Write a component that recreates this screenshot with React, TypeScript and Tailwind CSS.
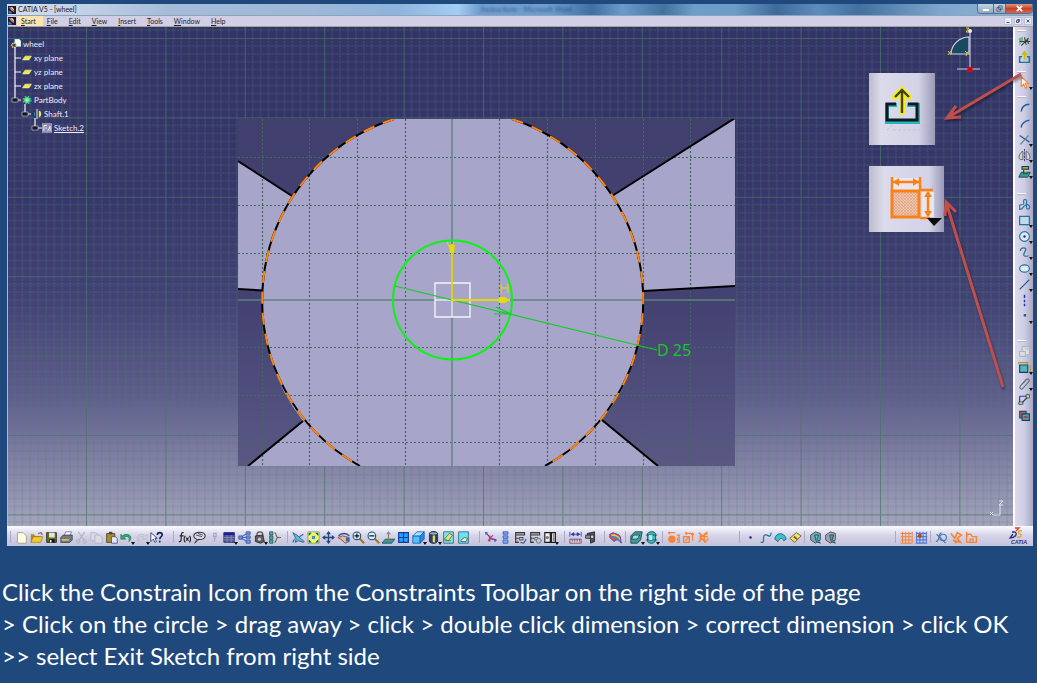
import type { ReactNode } from "react";
import clsx from "clsx";

interface ITool {
  name: string;
  art: ReactNode;
  menu?: boolean;
}

interface IToolGroup {
  size: string;
  tools: ITool[];
}

const teal = "#127a8c";
const navy = "#1b2f8f";
const orange = "#f98332";

const menus = ["Start", "File", "Edit", "View", "Insert", "Tools", "Window", "Help"];

const bottomGroups: IToolGroup[] = [
  {
    size: "w-[163px]",
    tools: [
      { name: "New", art: <path d="M3 2h7l4 4v9H3z" fill="#fffde0" stroke="#99978a" /> },
      {
        name: "Open",
        art: (
          <>
            <path d="M1 14V4h4l1 2h7v3z" fill="#b48a1e" />
            <path d="M1 14l3-7h12l-3 7z" fill="#f3c932" stroke="#8b6b16" strokeWidth=".7" />
            <path d="M10 3l4-1 1 3" fill="none" stroke="#333" />
          </>
        ),
      },
      {
        name: "Save",
        art: (
          <>
            <path d="M2 2h12v12H2z" fill="#6b6c24" stroke="#24251a" />
            <path d="M5 2h7v6H5z" fill="#e4e6da" />
            <path d="M5 10h7v4H5z" fill="#151515" />
            <path d="M6 11h2v3H6z" fill="#fff" />
          </>
        ),
      },
      {
        name: "Print",
        art: (
          <>
            <path d="M5 7l2-6h7l-2 6z" fill="#fff" stroke="#556" strokeWidth=".8" />
            <path d="M1 8l3-3h11v6l-3 3H1z" fill="#777a80" stroke="#3b3d48" />
            <path d="M2 10h9v2H2z" fill="#d7c84a" />
            <path d="M13 7l2-2v5l-2 2z" fill="#3f7abf" />
          </>
        ),
      },
      {
        name: "Cut",
        art: (
          <g fill="none" stroke="#b4b6c4" strokeWidth="1.4">
            <path d="M4 1l7 10M12 1L5 11" />
            <circle cx="4" cy="13" r="2" />
            <circle cx="12" cy="13" r="2" />
          </g>
        ),
      },
      {
        name: "Copy",
        art: (
          <g fill="#d9d9e6" stroke="#b0b2c0">
            <path d="M1 2h6l3 3v7H1z" />
            <path d="M6 5h6l3 3v7H6z" />
          </g>
        ),
      },
      {
        name: "Paste",
        art: (
          <>
            <path d="M2 3h10v11H2z" fill="#a98a31" stroke="#4b421e" />
            <path d="M5 1h4v3H5z" fill="#444" />
            <path d="M8 7h5l2 2v6H8z" fill="#e8e8f4" stroke="#4a4c8c" />
          </>
        ),
      },
      {
        name: "Undo",
        menu: true,
        art: <path d="M1 4v6h6L5 8c3-3 8-1 6 5 6-6-1-12-8-7z" fill="#2fae6e" stroke="#11614a" strokeWidth=".7" />,
      },
      {
        name: "Redo",
        menu: true,
        art: <path d="M15 4v6H9l2-2c-3-3-8-1-6 5-6-6 1-12 8-7z" fill="#d0d1dd" stroke="#b0b2bf" strokeWidth=".7" />,
      },
      {
        name: "What's this",
        art: (
          <>
            <path d="M1 2v11l3-3 2 4 2-1-2-4h3z" fill="#fff" stroke="#1c2c6b" />
            <path d="M9 5c0-4 6-4 6 0 0 2-3 2-3 5M12 12v2" fill="none" stroke="#17275c" strokeWidth="2" />
          </>
        ),
      },
    ],
  },
  {
    size: "w-[114px]",
    tools: [
      {
        name: "Formula",
        art: (
          <path
            d="M7 2C4 1 4 4 4 7s0 7-3 6M2 6h5M9 6c-2 2-2 6 0 8M14 6c2 2 2 6 0 8M10 8l3 4M13 8l-3 4"
            fill="none"
            stroke="#222"
            strokeWidth="1.4"
          />
        ),
      },
      {
        name: "Comment",
        art: (
          <>
            <ellipse cx="8" cy="6" rx="7" ry="4.5" fill="#dadbe6" stroke="#30303a" strokeWidth="1.3" />
            <path d="M5 10l-3 5 6-5M4 5l7 2M6 3l6 2" fill="none" stroke="#30303a" />
          </>
        ),
      },
      {
        name: "Check",
        art: <path d="M7 3h3v4H7zM7 9h3M8 10v3" fill="none" stroke="#a4a6b6" strokeWidth="1.4" />,
      },
      {
        name: "Design table",
        menu: true,
        art: (
          <>
            <path d="M1 2h13v12H1z" fill="#4c568f" stroke="#30345e" />
            <path d="M1 2h13v3H1z" fill="#1c1f9e" />
            <path d="M1 8h13M1 11h13M5 5v9M10 5v9" stroke="#8a90bb" />
          </>
        ),
      },
      {
        name: "Law",
        art: (
          <>
            <path d="M3 8l8-5M3 8h9M3 8l8 5" stroke="#4a6ac0" strokeWidth="1.3" />
            <path d="M1 6h4v4H1zM10 1h5v3h-5zM10 6h5v3h-5zM10 11h5v4h-5z" fill="#6f9ce0" stroke="#3552a0" />
          </>
        ),
      },
      {
        name: "Lock",
        menu: true,
        art: (
          <>
            <path d="M5 7V4c0-4 7-4 7 0v3" fill="none" stroke="#555" strokeWidth="1.6" />
            <path d="M3 6l9-1 2 8-5 2-6-2z" fill="#5c5c62" stroke="#242424" />
            <circle cx="8" cy="10" r="2" fill="#c8c8c8" />
          </>
        ),
      },
      {
        name: "Equivalent dimensions",
        art: (
          <>
            <path d="M2 1h4v4H2zM2 6h4v4H2zM2 11h4v4H2z" fill="#5aa59b" stroke="#1e5c63" />
            <path d="M8 2c3 0 1 5 4 6-3 1-1 6-4 6M12 8h4" fill="none" stroke="#6e6a4c" strokeWidth="1.4" />
          </>
        ),
      },
    ],
  },
  {
    size: "w-[192px]",
    tools: [
      {
        name: "Fly mode",
        art: (
          <>
            <path d="M1 2l5 3 9 8-1 1-6-2-4 2 1-4z" fill="#65b6d4" stroke="#245c91" />
            <path d="M9 7l5-3M3 10L1 14" stroke="#3167a3" strokeWidth="1.4" />
          </>
        ),
      },
      {
        name: "Fit all in",
        art: (
          <>
            <path d="M1 1h14v14H1z" fill="#f4f66e" stroke="#8aa36a" />
            <path d="M2 2h4L2 6zM14 2h-4l4 4zM2 14h4l-4-4zM14 14h-4l4-4z" fill="#17607a" />
            <path d="M6 6h4v4H6z" fill="#2c9cb4" />
          </>
        ),
      },
      {
        name: "Pan",
        art: (
          <>
            <path d="M8 2v12M2 8h12" stroke="#23467f" strokeWidth="1.8" />
            <path d="M8 0l3 4H5zM8 16l3-4H5zM0 8l4-3v6zM16 8l-4-3v6z" fill="#23467f" />
          </>
        ),
      },
      {
        name: "Rotate",
        art: (
          <>
            <path d="M2 6c3-4 10-4 13 0" fill="none" stroke="#274d8f" strokeWidth="1.8" />
            <path d="M1 8l6-2 8 2v5l-5 2-4-4z" fill="#eab79f" stroke="#754536" />
            <path d="M11 8h4v5h-4z" fill="#2f6cbb" />
          </>
        ),
      },
      {
        name: "Zoom in",
        art: (
          <>
            <path d="M9 9l6 6" stroke="#a47328" strokeWidth="2.4" />
            <circle cx="6" cy="6" r="4.7" fill="#d7f1fa" stroke="#234770" strokeWidth="1.3" />
            <path d="M6 3v6M3 6h6" stroke="#111" strokeWidth="1.5" />
          </>
        ),
      },
      {
        name: "Zoom out",
        art: (
          <>
            <path d="M9 9l6 6" stroke="#a47328" strokeWidth="2.4" />
            <circle cx="6" cy="6" r="4.7" fill="#d7f1fa" stroke="#234770" strokeWidth="1.3" />
            <path d="M3 6h6" stroke="#111" strokeWidth="1.5" />
          </>
        ),
      },
      {
        name: "Normal view",
        art: (
          <>
            <path d="M4 10h12l-4 5H0z" fill="#319b9e" stroke="#17525c" />
            <path d="M8 12V3" stroke="#a57638" strokeWidth="1.4" />
            <path d="M8 0l3 4H5z" fill="#6c90d4" />
          </>
        ),
      },
      {
        name: "Multi-view",
        art: (
          <>
            <path d="M2 2h12v12H2z" fill="#22a5f5" stroke="#1b34a1" strokeWidth="1.4" />
            <path d="M8 2v12M2 8h12" stroke="#1b34a1" strokeWidth="1.4" />
          </>
        ),
      },
      {
        name: "Isometric view",
        menu: true,
        art: (
          <>
            <path d="M1 6h9v9H1z" fill="#4bc4f7" stroke="#1b55b8" />
            <path d="M1 6l5-5h9l-5 5z" fill="#a0e6ff" stroke="#1b55b8" />
            <path d="M10 6l5-5v9l-5 5z" fill="#238add" stroke="#1b55b8" />
          </>
        ),
      },
      {
        name: "Shading",
        menu: true,
        art: (
          <>
            <path d="M3 3c2-3 8-3 10 0v10c-2 3-8 3-10 0z" fill="#263d79" stroke="#222338" />
            <path d="M7 4h3v10H7z" fill="#e4d84a" />
            <ellipse cx="8" cy="3" rx="5" ry="2" fill="#8eb5c8" stroke="#222338" />
          </>
        ),
      },
      {
        name: "Hide/Show",
        art: (
          <>
            <path d="M2 1h12v14H2z" fill="#7ce7e9" stroke="#375c78" />
            <path d="M3 10l6-7 4 2-5 7zM3 12h8" fill="#e8df7c" stroke="#536f47" />
          </>
        ),
      },
      {
        name: "Swap visible space",
        art: (
          <>
            <path d="M2 1h12v14H2z" fill="#69e4f3" stroke="#375c78" />
            <path d="M5 11l4-3 4 1-2 4H5z" fill="#faf7c0" stroke="#285a74" />
          </>
        ),
      },
    ],
  },
  {
    size: "w-[85px]",
    tools: [
      {
        name: "Axis system",
        art: (
          <>
            <path d="M2 2l5 5v6M7 9l8 2" fill="none" stroke="#384ac0" strokeWidth="1.6" />
            <path d="M5 12l6-7M6 6l5 5" stroke="#e3324d" strokeWidth="1.5" />
            <path d="M1 1l4 1-3 3zM12 9l4 2-3 3z" fill="#425fca" />
          </>
        ),
      },
      {
        name: "Mean dimensions",
        art: <path d="M5 1h6v3H5zM5 6h6v3H5zM5 11h6v4H5z" fill="#80a9f4" stroke="#4065c2" strokeWidth="1.2" />,
      },
      {
        name: "Create datum",
        art: (
          <>
            <path d="M2 2h11v3H2zM2 5v9h4M2 9h4" fill="#c7b874" stroke="#31384e" strokeWidth="1.3" />
            <path d="M7 8h4v3H7zM8 14l4 1 3-5" fill="none" stroke="#3c5379" strokeWidth="1.3" />
          </>
        ),
      },
      {
        name: "Keep mode",
        art: (
          <>
            <path d="M2 2h11v3H2zM2 5v9h4M2 9h4" fill="#c7b874" stroke="#31384e" strokeWidth="1.3" />
            <path d="M7 8h4v3H7z" fill="none" stroke="#3c5379" />
            <circle cx="12" cy="12" r="3" fill="#c3c5cf" stroke="#676b71" />
          </>
        ),
      },
      {
        name: "Only current body",
        menu: true,
        art: (
          <>
            <path d="M1 2h13v12H1z" fill="#f4f4f4" stroke="#1b1b1b" strokeWidth="1.4" />
            <path d="M7 2h3v12H7z" fill="#222" />
            <circle cx="4" cy="8" r="2" fill="#777" />
            <path d="M11 3h2v5h-2z" fill="#cf7644" />
            <path d="M11 8h2v4h-2z" fill="#409a5a" />
          </>
        ),
      },
    ],
  },
  {
    size: "w-[40px]",
    tools: [
      {
        name: "Measure between",
        art: (
          <>
            <path d="M2 4h12M1 1v6M15 1v6M3 4l3-2v4zM13 4l-3-2v4z" fill="#2a3bb1" stroke="#2a3bb1" />
            <path d="M1 10h14v5H1z" fill="#e8c7c4" stroke="#634b76" />
            <path d="M4 10v3M7 10v3M10 10v3M13 10v3" stroke="#634b76" />
          </>
        ),
      },
      {
        name: "Measure item",
        art: (
          <>
            <path d="M4 3l9-2v12l-5 2V9L4 8z" fill="#4c4d55" stroke="#25252b" />
            <path d="M2 5h6v4H2z" fill="#87919a" stroke="#26303d" />
            <circle cx="10" cy="7" r="1.5" fill="#d8dae0" />
          </>
        ),
      },
    ],
  },
  {
    size: "w-[21px]",
    tools: [
      {
        name: "Apply material",
        art: (
          <>
            <path d="M1 4l4-2c3 2 7 1 9 5l1 8c-2-5-6-5-9-2L1 8z" fill="#df4f47" stroke="#4a3f83" />
            <path d="M3 5c4 0 9 1 10 6" fill="none" stroke="#f0c84d" strokeWidth="2" />
            <path d="M3 8c4-1 8 0 10 5" fill="none" stroke="#2c93dd" strokeWidth="2" />
          </>
        ),
      },
    ],
  },
  {
    size: "w-[37px]",
    tools: [
      {
        name: "Cut part",
        menu: true,
        art: (
          <>
            <path d="M1 6l5-5h9l-2 10-4 4H1z" fill="#3c9e9c" stroke="#173b47" />
            <path d="M4 5h8l-3 5H2z" fill="#9de3dd" stroke="#173b47" />
          </>
        ),
      },
      {
        name: "Usable edges",
        menu: true,
        art: (
          <>
            <path d="M3 3c3-3 8-3 10 0v9c-2 4-7 4-10 1z" fill="#42b5b9" stroke="#184d57" />
            <path d="M1 5h14M1 11h14" stroke="#184d57" />
            <path d="M5 5h4v6H5z" fill="#aef0ee" />
          </>
        ),
      },
    ],
  },
  {
    size: "w-[77px]",
    tools: [
      {
        name: "Diagnosis",
        art: (
          <>
            <circle cx="6" cy="10" r="4.5" fill={orange} />
            <path d="M1 2h9M12 5h3v9h-3M13 8v4M3 1v3" fill="none" stroke={orange} strokeWidth="1.6" />
          </>
        ),
      },
      {
        name: "Geometrical constraints",
        art: <path d="M2 7h7v7H2zM4 3h9v9M5 5V1M15 4h-4M4 12l4-4" fill="none" stroke={orange} strokeWidth="1.6" />,
      },
      {
        name: "Dimensional constraints",
        art: (
          <path
            d="M2 2l5 4 5-4M3 7h10M2 14l4-5 4 5 4-5M12 1v4M4 5v8M9 3v10"
            fill="none"
            stroke={orange}
            strokeWidth="1.6"
          />
        ),
      },
    ],
  },
  {
    size: "w-[65px]",
    tools: [
      { name: "Point", art: <circle cx="8" cy="8" r="1.6" fill={navy} /> },
      {
        name: "Curve",
        art: <path d="M2 14c7 1 1-7 5-9s7 6 8-3" fill="none" stroke="#2676a1" strokeWidth="1.5" />,
      },
      {
        name: "Surface",
        art: <path d="M1 10C2 1 13 1 15 10l-3 2c-2-5-5-3-7 1z" fill="#3ac1cf" stroke="#185b77" />,
      },
      {
        name: "Volume",
        art: (
          <>
            <path d="M1 9l8-7 6 4-8 8z" fill="#f2df64" stroke="#575037" />
            <path d="M6 7l4 3" stroke="#575037" strokeWidth="2" />
          </>
        ),
      },
    ],
  },
  {
    size: "w-[91px]",
    tools: [
      {
        name: "Select feature",
        art: (
          <>
            <path d="M2 5l6-4 6 2v8l-6 4-6-4z" fill="#7ba7b0" stroke="#384451" />
            <path d="M7 5h5l-2 5 4 5-5-2z" fill="#36d0d7" stroke="#263d4e" />
          </>
        ),
      },
      {
        name: "Select geometry",
        art: (
          <>
            <path d="M2 5l6-4 6 2v8l-6 4-6-4z" fill="#9aa4ac" stroke="#593c48" />
            <path d="M7 5h5l-2 5 4 5-5-2z" fill="#42a9c1" stroke="#263d4e" />
          </>
        ),
      },
    ],
  },
  {
    size: "w-[35px]",
    tools: [
      {
        name: "Grid",
        art: <path d="M3 1v14M7 1v14M11 1v14M15 1v14M1 3h14M1 7h14M1 11h14M1 15h14" stroke={orange} strokeWidth="1.3" />,
      },
      {
        name: "Snap to point",
        art: (
          <>
            <path d="M2 1v14M6 1v14M10 1v14M14 1v14M1 3h14M1 7h14M1 11h14M1 15h14" stroke="#557ad4" strokeWidth="1.4" />
            <circle cx="6" cy="6" r="2.5" fill="#a84c28" />
          </>
        ),
      },
    ],
  },
  {
    size: "w-[49px]",
    tools: [
      {
        name: "Construction element",
        art: (
          <g fill="none" stroke="#3f7ea8" strokeWidth="1.4">
            <path d="M1 13c6-1 2-9 7-11M2 4l11 11" />
            <circle cx="10" cy="8" r="4" />
          </g>
        ),
      },
      {
        name: "Constraints in sketch",
        art: <path d="M1 3l5 6 3-7 5 3-5 4 4 5-7-2M4 11l4 4" fill="none" stroke={orange} strokeWidth="2" />,
      },
      {
        name: "Auto dimension",
        art: <path d="M2 1v13h12V7H9L7 4H2M1 6h3M6 14v-4h4v4" fill="none" stroke={orange} strokeWidth="1.6" />,
      },
    ],
  },
];

const sideGroups: IToolGroup[] = [
  {
    size: "h-[41px]",
    tools: [
      {
        name: "Sketcher",
        art: (
          <>
            <path d="M1 4l5-2v5l-4 6z" fill="#6fb495" />
            <path d="M2 8h13M4 13l9-9M8 3l2 9M11 5l2 6" stroke="#364238" strokeWidth="1.4" />
          </>
        ),
      },
      {
        name: "Exit workbench",
        art: (
          <>
            <path d="M5 7H2v7h12V7h-3" fill="none" stroke={teal} strokeWidth="1.8" />
            <path d="M8 11V3M5 5l3-4 3 4" fill="none" stroke="#c8bc10" strokeWidth="2" />
          </>
        ),
      },
    ],
  },
  {
    size: "h-[25px]",
    tools: [
      {
        name: "Select",
        menu: true,
        art: <path d="M4 1v12l3-3 2 5 2-1-2-5h4z" fill="#fff5e8" stroke={orange} strokeWidth="1.3" />,
      },
    ],
  },
  {
    size: "h-[97px]",
    tools: [
      { name: "Corner", art: <path d="M4 13C4 8 8 4 14 4" fill="none" stroke="#1f5f98" strokeWidth="1.8" /> },
      {
        name: "Chamfer",
        art: <path d="M4 13c0-4 1-4 3-6s3-3 7-3" fill="none" stroke="#1f5f98" strokeWidth="1.8" />,
      },
      {
        name: "Trim",
        menu: true,
        art: (
          <>
            <path d="M2 3l12 8" stroke="#254c96" strokeWidth="1.5" />
            <path d="M13 3L3 14" stroke="#4b8c7f" strokeWidth="1.5" />
          </>
        ),
      },
      {
        name: "Mirror",
        menu: true,
        art: (
          <>
            <path d="M6 3v10H3c-4-2 0-10 3-10zM10 3v10h3c4-2 0-10-3-10z" fill="#d2d1cb" stroke="#4b4d51" />
            <path d="M8 0v16" stroke="#29297e" strokeDasharray="3 1" />
          </>
        ),
      },
      {
        name: "Project 3D elements",
        menu: true,
        art: (
          <>
            <path d="M4 9h11l-3 6H1z" fill="#2f9d91" stroke="#173e42" />
            <path d="M5 2h8v3H5zM7 6v4h5" fill="#d9c94e" stroke="#173e42" strokeWidth="1.4" />
          </>
        ),
      },
    ],
  },
  {
    size: "h-[147px]",
    tools: [
      {
        name: "Profile",
        art: (
          <path
            d="M2 14V9l4-1c3-1-1-5 2-6s3 3 2 5l3 2c3 2 0 6-2 4s1-5-2-4-2 5-7 5z"
            fill="none"
            stroke="#28749f"
            strokeWidth="1.4"
          />
        ),
      },
      { name: "Rectangle", menu: true, art: <path d="M2 3h12v10H2z" fill="#bddbea" stroke="#23729b" strokeWidth="1.5" /> },
      {
        name: "Circle",
        menu: true,
        art: (
          <>
            <circle cx="8" cy="8" r="6" fill="#deebf5" stroke="#23729b" strokeWidth="1.4" />
            <circle cx="8" cy="8" r="1.5" fill="#1c28b0" />
          </>
        ),
      },
      {
        name: "Spline",
        menu: true,
        art: <path d="M3 6c0-5 9-5 6 0s-3 8 4 6" fill="none" stroke="#23729b" strokeWidth="1.5" />,
      },
      {
        name: "Ellipse",
        menu: true,
        art: <ellipse cx="8" cy="8" rx="6" ry="4.5" fill="#deebf5" stroke="#23729b" strokeWidth="1.4" />,
      },
      { name: "Line", menu: true, art: <path d="M2 14L14 2" stroke="#1d5b99" strokeWidth="1.5" /> },
      { name: "Axis", art: <path d="M8 1v4M8 7v3M8 12v3" stroke="#1934b5" strokeWidth="1.8" /> },
      { name: "Point by clicking", menu: true, art: <path d="M7 5h3v3H7z" fill="#1c5b7c" /> },
    ],
  },
  {
    size: "h-[84px]",
    tools: [
      {
        name: "Constraints in dialog box",
        art: <path d="M2 8h7v6H2zM5 2h9v10h-4M5 7V2M9 5h5" fill="#dedee5" stroke="#b2b2ba" strokeWidth="1.3" />,
      },
      {
        name: "Constraint",
        menu: true,
        art: (
          <>
            <path d="M2 5h10v9H2z" fill="#51b6c0" stroke="#213c51" strokeWidth="1.3" />
            <path d="M2 2h10M15 5v9M1 1v3M12 1v3" stroke="#a49a28" strokeWidth="1.3" />
          </>
        ),
      },
      {
        name: "Fix together",
        menu: true,
        art: <path d="M3 11l7-8c3-2 5 1 3 3l-7 8c-2 2-5 0-3-3l7-7" fill="none" stroke="#666b72" strokeWidth="1.3" />,
      },
      {
        name: "Animate constraint",
        art: (
          <>
            <path d="M2 4h12M2 4v10M5 12l8-8" fill="none" stroke="#23418d" strokeWidth="1.4" />
            <path d="M10 2h4v4h-4zM1 11h5v3H1z" fill="#e7dc69" stroke="#2e435c" />
          </>
        ),
      },
      {
        name: "Edit multi-constraint",
        art: (
          <>
            <path d="M2 3h8v8H2z" fill="#b85c6c" stroke="#37495e" strokeWidth="1.4" />
            <path d="M5 6h9v8H5z" fill="#4aaab1" stroke="#263c4c" strokeWidth="1.4" />
            <path d="M7 10h5" stroke="#c22c36" strokeWidth="2" />
          </>
        ),
      },
    ],
  },
];

const ToolButton: React.FC<ITool> = ({ name, art, menu }) => (
  <button type="button" aria-label={name} className="relative flex h-4 w-[15px] shrink-0 items-center justify-center">
    <svg viewBox="0 0 16 16" className="size-[13px]" fill="none">
      {art}
    </svg>
    {menu && (
      <svg viewBox="0 0 4 3" className="absolute -right-px bottom-0 h-[3px] w-1">
        <path d="M0 0h4L2 3z" fill="#111" />
      </svg>
    )}
  </button>
);

const AppMark = () => (
  <svg viewBox="0 0 16 16" className="size-2 shrink-0">
    <path d="M0 0h16v16H0z" fill="#14183f" />
    <path d="M1 2l8 2 4 9-6-4z" fill="#f37c24" />
    <path d="M4 2l6 1 3 7-5-5z" fill="#ffe7a5" />
    <path d="M1 9l5 2 2 4H1z" fill="#3c77d6" />
  </svg>
);

const TitleBar = () => (
  <header className="flex h-3 items-start border-b border-[#8fa3bd] bg-[linear-gradient(90deg,#d5dfec_0%,#c3d2e6_7%,#a4bcd9_16%,#9db8d8_30%,#8db4dd_38%,#a3cdf2_44%,#6f9fd2_46%,#6d9ed0_53%,#3f6fa3_57%,#6b9acb_60%,#44729f_64%,#6f9ecb_67%,#6c9bc8_71%,#3e6a99_75%,#5d8cbd_79%,#42709f_83%,#7fa7cd_91%,#8db3d5_100%)] pl-px">
    <div className="flex flex-1 items-center gap-[2px] pt-px">
      <AppMark />
      <h1 className="text-[7px] leading-[9px] text-[#1a1a28]">CATIA V5 - [wheel]</h1>
      <span className="mr-[405px] ml-auto text-[7px] leading-[9px] text-[#1f3a5c] opacity-70 blur-[1px]">
        Instructions - Microsoft Word
      </span>
    </div>
    <div className="flex h-[10px] overflow-hidden rounded-b-sm border border-t-0 border-[#56708d]">
      <button
        type="button"
        aria-label="Minimize"
        className="flex w-[15px] items-end justify-center bg-gradient-to-b from-[#c5d3e2] to-[#8ca8c4] pb-[2px]"
      >
        <span className="h-[2px] w-[6px] bg-white" />
      </button>
      <button
        type="button"
        aria-label="Restore"
        className="flex w-[13px] items-center justify-center border-x border-[#56708d] bg-gradient-to-b from-[#c5d3e2] to-[#8ca8c4]"
      >
        <svg viewBox="0 0 8 8" className="size-[7px]">
          <path d="M3 1h4v4H3zM1 3h4v4H1z" fill="#b8c8d8" stroke="#4c5e73" />
        </svg>
      </button>
      <button
        type="button"
        aria-label="Close"
        className="flex w-[26px] items-center justify-center bg-gradient-to-b from-[#dd9686] via-[#c7422b] to-[#d8664d]"
      >
        <svg viewBox="0 0 8 8" className="size-[7px]">
          <path d="M1 1l6 6M7 1L1 7" stroke="#fff" strokeWidth="2" />
        </svg>
      </button>
    </div>
  </header>
);

const MenuBar = () => (
  <nav className="flex h-[11px] items-center border-b border-[#a7a497] bg-[#d0cfe6] pl-px">
    <AppMark />
    <div className="flex flex-1 pl-px">
      {menus.map((menu) => (
        <button
          key={menu}
          type="button"
          className={clsx("pr-[7px] pl-1 text-[7px] leading-[10px] text-[#1d1d2b]", menu === "Start" && "bg-[#ffe3b0]")}
        >
          <u>{menu[0]}</u>
          {menu.slice(1)}
        </button>
      ))}
    </div>
    <div className="flex gap-[2px] pr-px">
      {[
        { name: "Minimize document", d: "M2 6h4" },
        { name: "Restore document", d: "M3 2h3v3M2 3h3v3H2z" },
        { name: "Close document", d: "M2 2l4 4M6 2L2 6" },
      ].map(({ name, d }) => (
        <button key={name} type="button" aria-label={name} className="size-2 border border-[#bcc3dc] bg-[#e8edf7]">
          <svg viewBox="0 0 8 8" className="size-full">
            <path d={d} fill="none" stroke="#40506b" strokeWidth="1.3" />
          </svg>
        </button>
      ))}
    </div>
  </nav>
);

const planeIcon = <path d="M5 5h10l-4 6H1z" fill="#f0e64a" stroke="#fbf7a5" />;

const tree = [
  {
    label: "wheel",
    pad: "pl-[3px]",
    art: (
      <>
        <path d="M6 0h7l3 3v9H6z" fill="#fff" stroke="#59c7d8" />
        <circle cx="5" cy="10" r="3.5" fill="#333366" stroke="#efd87f" strokeWidth="2.5" strokeDasharray="2 1" />
      </>
    ),
  },
  { label: "xy plane", pad: "pl-[14px]", art: planeIcon },
  { label: "yz plane", pad: "pl-[14px]", art: planeIcon },
  { label: "zx plane", pad: "pl-[14px]", art: planeIcon },
  {
    label: "PartBody",
    pad: "pl-[14px]",
    art: (
      <>
        <circle cx="8" cy="8" r="5" fill="#4ddd96" stroke="#38c7a0" strokeWidth="4" strokeDasharray="2 2" />
        <circle cx="8" cy="8" r="2.5" fill="#e3ea6a" />
      </>
    ),
  },
  {
    label: "Shaft.1",
    pad: "pl-[24px]",
    art: (
      <>
        <path d="M6 3v10c-5 1-5-11 0-10z" fill="#2b7f95" stroke="#101c38" />
        <path d="M11 3v10c5 1 5-11 0-10z" fill="#f1e44f" />
        <path d="M8 0v16" stroke="#fff" strokeWidth="1.4" />
      </>
    ),
  },
  {
    label: "Sketch.2",
    pad: "pl-[34px]",
    art: (
      <>
        <path d="M0 1h16v14H0z" fill="#8c8cae" stroke="#b5b5cf" />
        <path d="M3 13V4h5M9 13l4-8v8M5 8h3" fill="none" stroke="#f0f0fa" strokeWidth="1.4" />
      </>
    ),
  },
];

const SpecTree = () => (
  <div className="relative w-24 pt-[10px]">
    <svg viewBox="0 0 96 112" className="absolute top-0 left-0 h-28 w-24">
      <path
        d="M7 19v54M7 31h6M7 45h6M7 59h6M7 73h6M17 77v10h6M27 91v10h7"
        fill="none"
        stroke="#f4f4fa"
        strokeWidth="1.2"
      />
      <path d="M4 71h6v4H4zM14 85h6v4h-6zM24 99h6v4h-6z" fill="#15151d" stroke="#d6d6e6" strokeWidth=".6" />
    </svg>
    <ul className="relative">
      {tree.map(({ label, pad, art }) => (
        <li key={label} className={clsx("flex h-[14px] items-center gap-[2px] text-[8px] leading-[10px] text-[#ececf6]", pad)}>
          <svg viewBox="0 0 16 16" className="size-[10px] shrink-0">
            {art}
          </svg>
          <span className={clsx("whitespace-nowrap", label === "Sketch.2" && "underline")}>{label}</span>
        </li>
      ))}
    </ul>
  </div>
);

const minor = Array.from({ length: 9 }, (_, i) => (i + 1) * 7.94);

const SketchGrid = () => (
  <svg className="absolute inset-0 size-full">
    <defs>
      <pattern id="grid" x="78" y="11" width="79.4" height="79.4" patternUnits="userSpaceOnUse">
        {minor.map((at) => (
          <path key={at} d={`M${at} 0v79.4M0 ${at}h79.4`} stroke="#4a7f6a" strokeOpacity=".45" strokeDasharray="2 1" />
        ))}
        <path d="M.5 0v79.4M0 .5h79.4" stroke="#42785f" strokeOpacity=".7" />
      </pattern>
    </defs>
    <rect width="100%" height="100%" fill="url(#grid)" />
  </svg>
);

const rim = "M394 119A190 190 0 0 0 360 466M512 119A190 190 0 0 1 545 466";

// Close-up of the shaft section with its diameter constraint
const SketchDrawing = () => (
  <svg viewBox="238 119 497 347" className="absolute top-[92px] left-[230px] h-[347px] w-[497px]">
    <defs>
      <linearGradient id="void" x1="0" y1="119" x2="0" y2="466" gradientUnits="userSpaceOnUse">
        <stop offset="0" stopColor="#403f6e" />
        <stop offset=".55" stopColor="#434272" />
        <stop offset="1" stopColor="#5a5883" />
      </linearGradient>
    </defs>
    <path d="M238 119h497v347H238z" fill="#a7a6ca" />
    <g fill="url(#void)">
      <path d="M238 119h156A190 190 0 0 0 292 196L238 161z" />
      <path d="M512 119h221L612 196A190 190 0 0 0 512 119z" />
      <path d="M735 286l-92 5A190 190 0 0 1 602 420l56 46h77z" />
      <path d="M238 289l25 1A190 190 0 0 0 303 421l-55 45h-10z" />
    </g>
    <path
      d="M262.5 119v347M309.5 119v347M357.5 119v347M405.5 119v347M499.5 119v347M547.5 119v347M595.5 119v347M643.5 119v347M690.5 119v347M238 157.5h497M238 205.5h497M238 253.5h497M238 347.5h497M238 395.5h497M238 442.5h497"
      stroke="#41695d"
      strokeWidth="1.2"
      strokeDasharray="2 2"
    />
    <path d="M238 300h497M452 119v347" stroke="#5f8279" strokeWidth="1.4" />
    <path
      d="M238 161l54 35M735 118L612 196M735 286l-92 5M602 420l56 46M238 289l25 1.5M303 421l-55 45"
      stroke="#000"
      strokeWidth="2"
    />
    <g fill="none" strokeWidth="2">
      <path d={rim} stroke="#000" />
      <path d={rim} stroke="#ff8410" strokeDasharray="12 9" />
    </g>
    <path d="M435 283h35v34h-35zM435 300h17v17" fill="none" stroke="#f3f3fa" strokeWidth="1.4" />
    <circle cx="452.5" cy="300" r="59.5" fill="none" stroke="#0df216" strokeWidth="2" />
    <path d="M395 286l262 64M496 307l15 7h-17" fill="none" stroke="#19c92a" strokeWidth="1.2" />
    <path d="M452 300v-56M452 300h58" stroke="#e2dc00" strokeWidth="1.8" />
    <path d="M449 245l1 8h4l1-8zM499 297v6h6l4-3-4-3z" fill="#e2dc00" />
    <path d="M447 242l4 9 3-9M501 284v9M508 284v9M501 288h7" fill="none" stroke="#e2dc00" />
    <text x="657" y="356" fill="#19c92a" fontFamily="Open Sans, sans-serif" fontSize="16">
      D 25
    </text>
  </svg>
);

const Compass = () => (
  <svg viewBox="0 0 36 46" className="absolute top-0 right-[30px] h-[46px] w-9">
    <path d="M4 27A18 18 0 0 1 22 10v17z" fill="#1b4a60" stroke="#d8cdf4" strokeWidth="1.2" />
    <path d="M23 4v38M10 42h23" stroke="#c9c2ea" strokeWidth="1.2" />
    <circle cx="23" cy="4" r="2" fill="#f2eafc" />
    <path d="M20.5 40h5v5h-5z" fill="#d8000c" />
    <path d="M19 1h3l-3 4h3M1 24l3 4M4 24l-3 4M18 24l2 2 2-2M20 26l-1 3" fill="none" stroke="#d9d023" />
  </svg>
);

const Canvas = () => (
  <section
    aria-label="Sketch view"
    className="relative flex-1 overflow-hidden bg-[linear-gradient(180deg,#343368_0%,#38376c_35%,#434276_55%,#5f5d8c_74%,#8583a7_88%,#a5a4bd_100%)]"
  >
    <SketchGrid />
    <SketchDrawing />
    <Compass />
    <SpecTree />
    <svg viewBox="0 0 16 18" className="absolute right-2 bottom-2 h-[18px] w-4">
      <path d="M11 5v10H4M10 1h4l-4 4h4M1 12l3 3M4 12l-3 3" fill="none" stroke="#e2e2ee" />
    </svg>
  </section>
);

const SideToolbar = () => (
  <aside className="w-5 border-l-2 border-white bg-gradient-to-r from-[#dad9ec] via-[#cfcee6] to-[#a9a8c4] pt-[3px]">
    {sideGroups.map(({ size, tools }) => (
      <div key={size} className={clsx("relative flex flex-col items-center pt-[3px]", size)}>
        <span className="absolute top-0 left-[2px] h-px w-[9px] bg-white shadow-[0_1px_0_#b6b5ca]" />
        {tools.map((tool) => (
          <ToolButton key={tool.name} {...tool} />
        ))}
      </div>
    ))}
  </aside>
);

const BottomToolbar = () => (
  <footer className="flex h-5 items-center bg-gradient-to-b from-[#fbfbff] via-[#d3d2e8] to-[#c4c3dc] pl-[3px]">
    {bottomGroups.map(({ size, tools }) => (
      <div key={size} className={clsx("flex shrink-0 items-center pt-[2px]", size)}>
        <span className="mr-[3px] h-3 w-px bg-[#aaa9c0]" />
        {tools.map((tool) => (
          <ToolButton key={tool.name} {...tool} />
        ))}
      </div>
    ))}
    <svg viewBox="0 0 24 18" className="mr-[2px] ml-auto h-[18px] w-6" role="img" aria-label="CATIA">
      <path d="M8 1h4l-3 3" fill="none" stroke="#e23f35" strokeWidth="1.4" />
      <path d="M5 5h3c3 2 0 6-5 6l3-4" fill="none" stroke="#263277" strokeWidth="1.3" />
      <path d="M15 4c-4-1-5 2-2 3s0 4-3 3" fill="none" stroke="#e8a52c" strokeWidth="1.4" />
      <text x="4" y="17" fill="#35266f" fontSize="6" fontWeight="700" fontStyle="italic" fontFamily="Lato, sans-serif">
        CATIA
      </text>
    </svg>
  </footer>
);

// Enlarged toolbar icons and the arrows that tie them to the side toolbar
const Callouts = () => (
  <>
    <div className="absolute top-[73px] right-[102px] h-[72px] w-[66px] bg-[linear-gradient(90deg,#bcbccb,#dcdbeb_18%,#d3d2e7_75%,#9b9ab6)]">
      <svg viewBox="0 0 66 72" className="size-full">
        <path d="M18 57l8-8M24 57h26l8-8" fill="none" stroke="#c4c2c8" strokeDasharray="3 2" />
        <path d="M28 32H18v17h31V32H38" fill="none" stroke="#20b8bd" strokeWidth="4" />
        <path d="M27 31H18v16h30V31h-9" fill="none" stroke="#111820" strokeWidth="3" />
        <path d="M33 39V18M26 24l7-7 7 7" fill="none" stroke="#f4ee16" strokeWidth="6" strokeLinecap="round" />
        <path d="M33 40V18M26 24l7-7 7 7" fill="none" stroke="#44421b" strokeWidth="2.4" />
      </svg>
    </div>
    <div className="absolute top-[166px] right-[93px] h-[66px] w-[75px] bg-[linear-gradient(90deg,#bcbccb,#dcdbeb_20%,#d3d2e7_80%,#9b9ab6)]">
      <svg viewBox="0 0 75 66" className="size-full">
        <defs>
          <pattern id="hatch" width="3" height="3" patternUnits="userSpaceOnUse">
            <path d="M0 0h3v3H0z" fill="#e4c8bd" />
            <path d="M0 0l3 3M3 0L0 3" stroke="#ee9f6c" strokeWidth=".7" />
          </pattern>
        </defs>
        <path d="M23 12h28v12H23zM53 26h12v25H53z" fill="#e9e6f0" />
        <path d="M23 25h27v26H23z" fill="url(#hatch)" stroke="#fb8114" strokeWidth="3" />
        <path d="M23 25V11M51 25V11M51 24h13M51 52h10M23 16h28M59 26v24" stroke="#fb8114" strokeWidth="2.4" />
        <path d="M24 16l6-4v8zM50 16l-6-4v8zM59 25l-4 6h8zM59 51l-4-6h8z" fill="#fb8114" />
        <path d="M58 52h15l-8 8z" fill="#090909" />
      </svg>
    </div>
    <svg
      viewBox="0 0 97 330"
      className="absolute top-[70px] right-0 h-[330px] w-[97px] drop-shadow-[1px_2px_1px_rgba(0,0,0,0.4)]"
    >
      <g fill="none" stroke="#bd4f4c" strokeWidth="3">
        <path d="M81 4L7 48M16 36L7 48l14-1" />
        <path d="M63 317L6 132M5 146l1-14 10 10" />
      </g>
    </svg>
  </>
);

export default function App() {
  return (
    <main className="relative flex min-h-screen flex-col bg-[#1f497d] pt-1 font-[Lato,sans-serif]">
      <div className="mr-1 ml-[7px] flex flex-1 flex-col">
        <TitleBar />
        <MenuBar />
        <div className="flex flex-1 border-l border-[#b6b6d0]">
          <Canvas />
          <SideToolbar />
        </div>
        <BottomToolbar />
      </div>
      <div className="pt-[30px] pb-[11px] pl-[2px] text-[24px] leading-8 text-white">
        <p>Click the Constrain Icon from the Constraints Toolbar on the right side of the page</p>
        <p>&gt; Click on the circle &gt; drag away &gt; click &gt; double click dimension &gt; correct dimension &gt; click OK</p>
        <p>&gt;&gt; select Exit Sketch from right side</p>
      </div>
      <Callouts />
    </main>
  );
}
